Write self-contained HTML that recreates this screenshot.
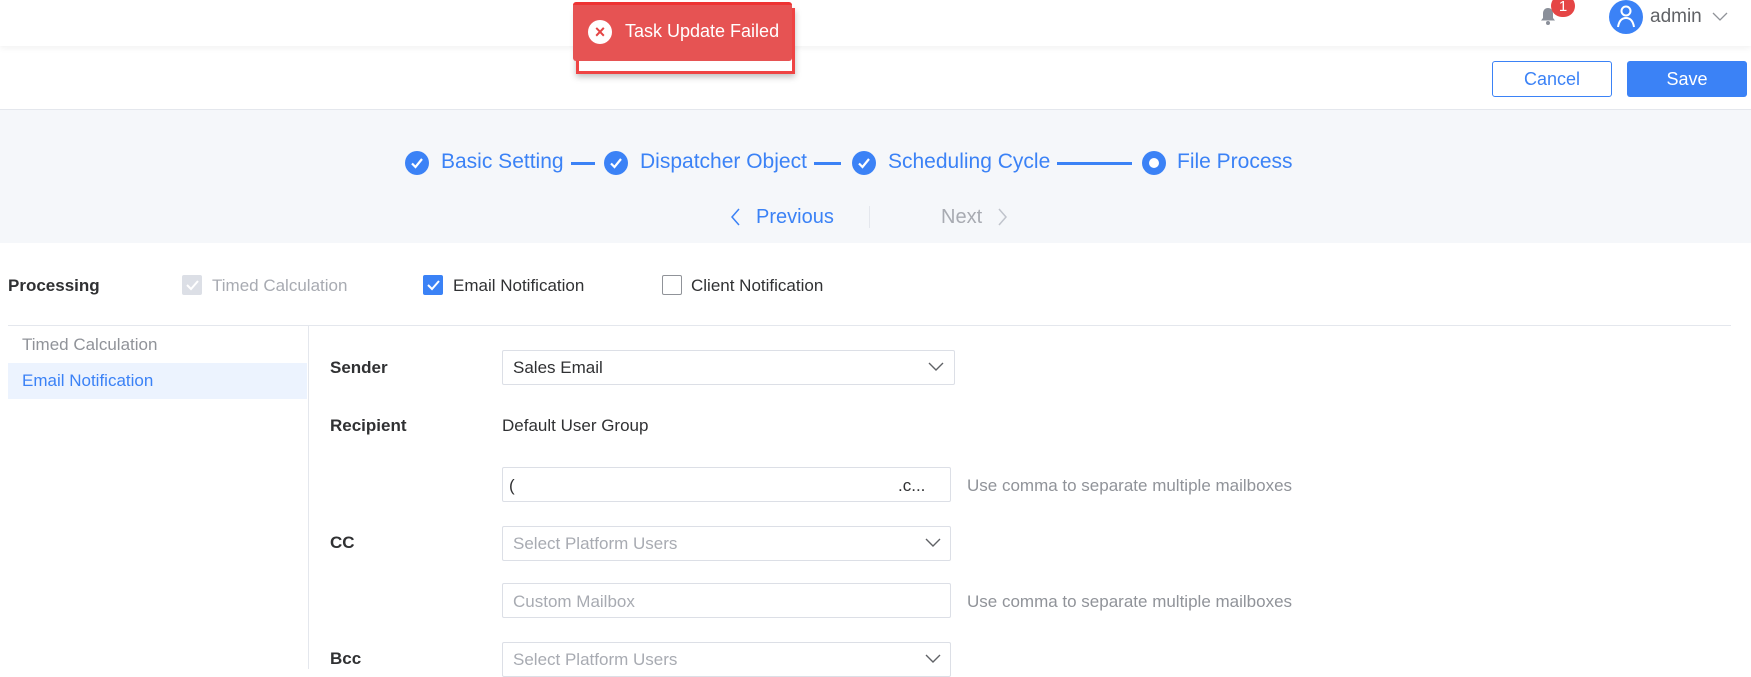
<!DOCTYPE html>
<html><head><meta charset="utf-8"><style>
*{box-sizing:border-box;margin:0;padding:0}
body{width:1751px;height:669px;overflow:hidden;background:#fff;font-family:"Liberation Sans",Arial,sans-serif;position:relative;color:#303133}
.a{position:absolute;white-space:nowrap}
.step{font-size:21px;color:#3b82f6;top:150px}
.ic{position:absolute;width:24px;height:24px;border-radius:50%;background:#3b82f6;top:151px}
.line{position:absolute;height:3px;background:#3b82f6;top:162px}
.lab{font-size:17px;font-weight:bold;color:#303133}
.box{position:absolute;border:1px solid #dcdfe6;background:#fff;border-radius:2px}
.t16{font-size:17px}
.ph{color:#a8abb2}
.cb{position:absolute;width:20px;height:20px;border-radius:2px;top:275px}
</style></head><body>
<div class="a" style="left:0;top:0;width:1751px;height:46px;background:#fff;box-shadow:0 2px 6px rgba(0,0,0,0.06)"></div>
<svg class="a" style="left:1538px;top:6px" width="20" height="20" viewBox="0 0 20 20"><path d="M10 2c-3 0-5 2.3-5 5.5v4.5l-2 2.5h14l-2-2.5v-4.5C15 4.3 13 2 10 2z" fill="#8a8f99"/><circle cx="10" cy="17" r="2" fill="#8a8f99"/></svg>
<div class="a" style="left:1551px;top:-5px;width:24px;height:22px;border-radius:11px;background:#e54545;color:#fff;font-size:15px;text-align:center;line-height:24px">1</div>
<div class="a" style="left:1609px;top:0;width:34px;height:34px;border-radius:50%;background:#3b82f6"></div>
<svg class="a" style="left:1609px;top:0" width="34" height="34" viewBox="0 0 34 34"><circle cx="17" cy="11" r="4.5" fill="none" stroke="#fff" stroke-width="2"/><path d="M9 27c1-6 4-9 8-9s7 3 8 9" fill="none" stroke="#fff" stroke-width="2"/></svg>
<div class="a" style="left:1650px;top:6px;font-size:19px;color:#606266">admin</div>
<svg class="a" style="left:1712px;top:10px" width="16" height="12" viewBox="0 0 16 12"><path d="M1 3l7 7 7-7" fill="none" stroke="#909399" stroke-width="1.3"/></svg>
<div class="a" style="left:576px;top:8px;width:219px;height:66px;border:3px solid #ef4444;background:#fff;box-shadow:0 3px 6px rgba(0,0,0,.25)"></div>
<div class="a" style="left:573px;top:2px;width:219px;height:59px;background:#e65353;border-radius:3px;border-top:3px solid #e33"></div>
<div class="a" style="left:588px;top:20px;width:24px;height:24px;border-radius:50%;background:#fff;color:#e54545;font-size:18px;font-weight:bold;text-align:center;line-height:24px">×</div>
<div class="a" style="left:625px;top:21px;font-size:18px;color:#fff">Task Update Failed</div>
<div class="a" style="left:1492px;top:61px;width:120px;height:36px;border:1px solid #3b82f6;border-radius:3px;color:#3b82f6;font-size:18px;text-align:center;line-height:35px">Cancel</div>
<div class="a" style="left:1627px;top:61px;width:120px;height:36px;background:#3b82f6;border-radius:3px;color:#fff;font-size:18px;text-align:center;line-height:37px">Save</div>
<div class="a" style="left:0;top:109px;width:1751px;height:134px;background:#f5f7fa;border-top:1px solid #e4e7ed"></div>
<svg width="0" height="0" style="position:absolute"><defs><path id="ck" d="M7 12.5l3.5 3.5 6.5-8" fill="none" stroke="#fff" stroke-width="2.2"/></defs></svg>
<div class="ic" style="left:405px"><svg width="24" height="24"><use href="#ck"/></svg></div>
<div class="a step" style="left:441px">Basic Setting</div>
<div class="line" style="left:571px;width:24px"></div>
<div class="ic" style="left:604px"><svg width="24" height="24"><use href="#ck"/></svg></div>
<div class="a step" style="left:640px">Dispatcher Object</div>
<div class="line" style="left:814px;width:27px"></div>
<div class="ic" style="left:852px"><svg width="24" height="24"><use href="#ck"/></svg></div>
<div class="a step" style="left:888px">Scheduling Cycle</div>
<div class="line" style="left:1057px;width:75px"></div>
<div class="ic" style="left:1142px"><div style="position:absolute;left:7px;top:7px;width:10px;height:10px;border-radius:50%;background:#fff"></div></div>
<div class="a step" style="left:1177px">File Process</div>
<svg class="a" style="left:730px;top:207px" width="12" height="20" viewBox="0 0 12 20"><path d="M9 2L2 10l7 8" fill="none" stroke="#3b82f6" stroke-width="1.5"/></svg>
<div class="a" style="left:756px;top:206px;font-size:20px;color:#3b82f6">Previous</div>
<div class="a" style="left:869px;top:206px;width:1px;height:22px;background:#e4e7ed"></div>
<div class="a" style="left:941px;top:206px;font-size:20px;color:#a8abb2">Next</div>
<svg class="a" style="left:996px;top:207px" width="12" height="20" viewBox="0 0 12 20"><path d="M3 2l7 8-7 8" fill="none" stroke="#c0c4cc" stroke-width="1.5"/></svg>
<div class="a lab" style="left:8px;top:276px">Processing</div>
<div class="cb" style="left:182px;background:#dcdfe6"><svg width="20" height="20"><path d="M5 10l4 4 7-8" fill="none" stroke="#fff" stroke-width="2"/></svg></div>
<div class="a t16" style="left:212px;top:276px;color:#a8abb2">Timed Calculation</div>
<div class="cb" style="left:423px;background:#3b82f6"><svg width="20" height="20"><path d="M5 10l4 4 7-8" fill="none" stroke="#fff" stroke-width="2"/></svg></div>
<div class="a t16" style="left:453px;top:276px">Email Notification</div>
<div class="cb" style="left:662px;border:1px solid #909399;background:#fff"></div>
<div class="a t16" style="left:691px;top:276px">Client Notification</div>
<div class="a" style="left:8px;top:325px;width:1723px;height:1px;background:#e4e7ed"></div>
<div class="a" style="left:308px;top:326px;width:1px;height:343px;background:#e4e7ed"></div>
<div class="a t16" style="left:22px;top:335px;color:#909399">Timed Calculation</div>
<div class="a" style="left:8px;top:363px;width:299px;height:36px;background:#ecf3fe"></div>
<div class="a t16" style="left:22px;top:371px;color:#3b82f6">Email Notification</div>
<div class="a lab" style="left:330px;top:358px">Sender</div>
<div class="box" style="left:502px;top:350px;width:453px;height:35px"></div>
<div class="a t16" style="left:513px;top:358px">Sales Email</div>
<svg class="a" style="left:928px;top:360px" width="16" height="12" viewBox="0 0 16 12"><path d="M1 3l7 7 7-7" fill="none" stroke="#606266" stroke-width="1.4"/></svg>
<div class="a lab" style="left:330px;top:416px">Recipient</div>
<div class="a t16" style="left:502px;top:416px">Default User Group</div>
<div class="box" style="left:502px;top:467px;width:449px;height:35px"></div>
<div class="a t16" style="left:509px;top:476px">(</div>
<div class="a t16" style="left:898px;top:476px">.c...</div>
<div class="a t16" style="left:967px;top:476px;color:#909399">Use comma to separate multiple mailboxes</div>
<div class="a lab" style="left:330px;top:533px">CC</div>
<div class="box" style="left:502px;top:526px;width:449px;height:35px"></div>
<div class="a t16 ph" style="left:513px;top:534px">Select Platform Users</div>
<svg class="a" style="left:925px;top:536px" width="16" height="12" viewBox="0 0 16 12"><path d="M1 3l7 7 7-7" fill="none" stroke="#606266" stroke-width="1.4"/></svg>
<div class="box" style="left:502px;top:583px;width:449px;height:35px"></div>
<div class="a t16 ph" style="left:513px;top:592px">Custom Mailbox</div>
<div class="a t16" style="left:967px;top:592px;color:#909399">Use comma to separate multiple mailboxes</div>
<div class="a lab" style="left:330px;top:649px">Bcc</div>
<div class="box" style="left:502px;top:642px;width:449px;height:35px"></div>
<div class="a t16 ph" style="left:513px;top:650px">Select Platform Users</div>
<svg class="a" style="left:925px;top:652px" width="16" height="12" viewBox="0 0 16 12"><path d="M1 3l7 7 7-7" fill="none" stroke="#606266" stroke-width="1.4"/></svg>
</body></html>
